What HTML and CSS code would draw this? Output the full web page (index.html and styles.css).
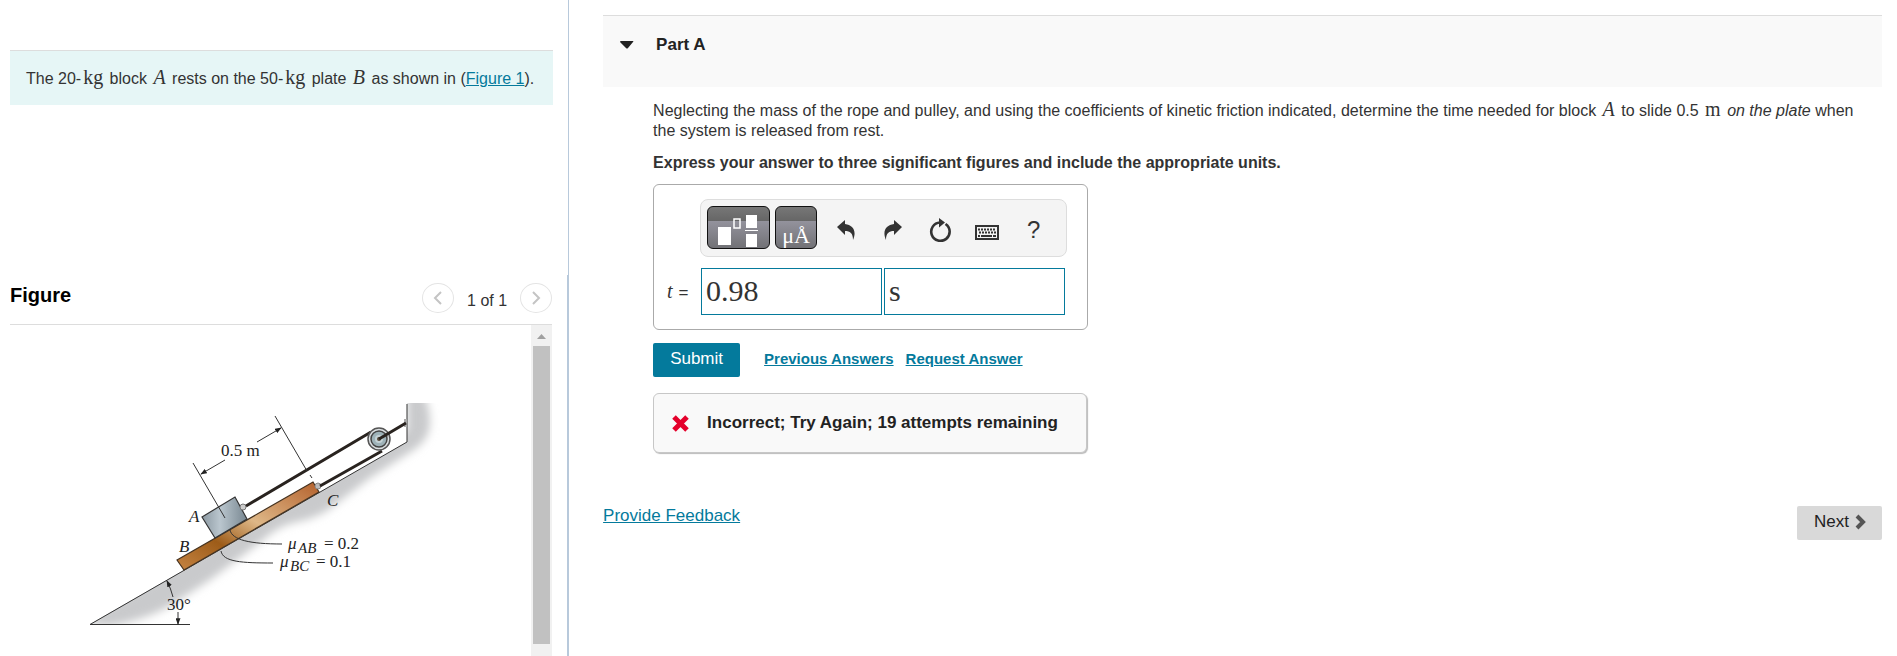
FILE: index.html
```html
<!DOCTYPE html>
<html lang="en">
<head>
  <meta charset="UTF-8">
  <meta name="viewport" content="width=device-width, initial-scale=1.0">
  <title>Part A</title>
  <link rel="stylesheet" href="styles.css">
</head>
<body>
  <div class="layout">
    <div class="left">
      <section class="intro-pane">
        <p class="intro">The 20-<span class="math">kg</span> block <i class="math">A</i> rests on the 50-<span class="math">kg</span> plate <i class="math">B</i> as shown in (<a href="#figure">Figure 1</a>).</p>
      </section>

      <section class="figure-pane" id="figure">
        <div class="figure-head">
          <h2>Figure</h2>
          <div class="pager">
            <button type="button" aria-label="Previous figure"><svg width="10" height="16" viewBox="0 0 10 16"><path d="M8 2 2 8l6 6"/></svg></button>
            <span>1 of 1</span>
            <button type="button" aria-label="Next figure"><svg width="10" height="16" viewBox="0 0 10 16"><path d="M2 2l6 6-6 6"/></svg></button>
          </div>
        </div>
        <div class="viewer">
          <div class="drawing">
            <svg width="360" height="250" viewBox="80 390 360 250" role="img" aria-label="Block A on plate B on a 30 degree incline">
              <defs>
                <linearGradient id="wood" x1="0" y1="1" x2="1" y2="0">
                  <stop offset="0" stop-color="#c68442"/>
                  <stop offset=".3" stop-color="#9d5c19"/>
                  <stop offset=".55" stop-color="#deb787"/>
                  <stop offset="1" stop-color="#b4612c"/>
                </linearGradient>
                <linearGradient id="steel" x1="0" y1="0" x2="1" y2="0">
                  <stop offset="0" stop-color="#8c99a2"/>
                  <stop offset=".4" stop-color="#bac6ce"/>
                  <stop offset="1" stop-color="#788791"/>
                </linearGradient>
                <filter id="soft" x="-10%" y="-10%" width="120%" height="120%"><feGaussianBlur stdDeviation="4"/></filter>
                <clipPath id="ground"><path d="M90 624 407 442V403H440V624Z"/></clipPath>
                <marker id="arrow" viewBox="0 0 8 6" refX="7" refY="3" markerWidth="7" markerHeight="5" markerUnits="userSpaceOnUse" orient="auto"><path d="M0 0 8 3 0 6Z" fill="#222"/></marker>
              </defs>

              <!-- ground -->
              <g clip-path="url(#ground)">
                <path d="M80 624 407 430V390H420Q430 402 430 422 430 440 412 451L370 478 336 504Q322 516 302 521 280 524 262 541L210 580 170 606Q145 620 110 626Z" fill="#c9cacc" filter="url(#soft)"/>
              </g>
              <path class="line" d="M190 624.500H90L407 442V404"/>

              <!-- plate, block -->
              <path d="M177 560 313 482 319 492 184 570Z" fill="url(#wood)" stroke="#45321f" stroke-width="1.200"/>
              <path d="M202 517 235 497 247 519 215 538Z" fill="url(#steel)" stroke="#333" stroke-width="1.200"/>

              <!-- ropes and pulley -->
              <circle cx="243" cy="507" r="3" fill="#ccc" stroke="#777"/>
              <circle cx="318" cy="486" r="3" fill="#bbb" stroke="#888"/>
              <path d="M404 419h3v8h-3z" fill="#aaa"/>
              <path class="rope" d="M246 506 371 432M320 486 382 451"/>
              <circle cx="379" cy="439" r="11" fill="#dde1e3" stroke="#555" stroke-width="1.500"/>
              <circle cx="379" cy="439" r="8" fill="#9eb2b8" stroke="#444" stroke-width="1.500"/>
              <circle cx="379" cy="439" r="4" fill="#c4d2d6"/>
              <circle cx="379" cy="439" r="2" fill="#5b4d3d"/>
              <path class="rope" d="M379 439 406 423"/>

              <!-- dimension -->
              <path class="line" d="M193 463 225 518M275 416 307 471M310 475 312 478"/>
              <path class="line" d="M225 460 201 474" marker-end="url(#arrow)"/>
              <path class="line" d="M257 442 281 428" marker-end="url(#arrow)"/>

              <!-- leaders and angle -->
              <path class="line" d="M230 530C232 540 250 544 282 544M221 551C223 562 242 563 273 563"/>
              <path class="line" d="M173 597Q171 589 167 581" marker-end="url(#arrow)"/>
              <path class="line" d="M178 612V624" marker-end="url(#arrow)"/>

              <text x="221" y="456">0.5 m</text>
              <text x="189" y="522" class="it">A</text>
              <text x="179" y="552" class="it">B</text>
              <text x="327" y="506" class="it">C</text>
              <text x="288" y="549" class="it">μ</text>
              <text x="298" y="553" class="it sub">AB</text>
              <text x="324" y="549">= 0.2</text>
              <text x="280" y="567" class="it">μ</text>
              <text x="290" y="571" class="it sub">BC</text>
              <text x="316" y="567">= 0.1</text>
              <text x="167" y="610">30°</text>
            </svg>
          </div>
          <div class="scrollbar" aria-hidden="true">
            <svg width="9" height="5" viewBox="0 0 9 5"><path d="M0 5 4.500 0 9 5Z" fill="#a0a0a0"/></svg>
            <div class="thumb"></div>
          </div>
        </div>
      </section>
    </div>

    <main class="right">
      <header class="part-head">
        <svg width="14" height="8" viewBox="0 0 14 8"><path d="M0 1Q0 0 1 0H13Q14 0 13 1L8 7Q7 8 6 7Z" fill="#222"/></svg>
        <h1>Part A</h1>
      </header>

      <div class="part-body">
        <p class="question">Neglecting the mass of the rope and pulley, and using the coefficients of kinetic friction indicated, determine the time needed for block <i class="math">A</i> to slide 0.5 <span class="math">m</span> <em>on the plate</em> when the system is released from rest.</p>
        <p class="instruction">Express your answer to three significant figures and include the appropriate units.</p>

        <div class="answer-box">
          <div class="toolbar">
            <button type="button" class="dark wide" aria-label="Templates">
              <svg width="40" height="34" viewBox="0 0 40 34"><path d="M0 13h13v18H0zM28 1h11v13H28zM28 20h11v13H28zM27 16h13v1H27z" fill="#fff"/><path d="M16 5h6v9h-6z" fill="none" stroke="#fff" stroke-width="1.500"/></svg>
            </button>
            <button type="button" class="dark units" aria-label="Units">μÅ</button>
            <button type="button" class="tool" aria-label="Undo">
              <svg width="18" height="20" viewBox="0 0 18 20"><path d="M0 7 8 0V4C16 5 20 11 16 20 16 13 13 11 8 11V15Z" fill="#333"/></svg>
            </button>
            <button type="button" class="tool" aria-label="Redo">
              <svg width="18" height="20" viewBox="0 0 18 20"><path d="M18 7 10 0V4C2 5-2 11 2 20 2 13 5 11 10 11V15Z" fill="#333"/></svg>
            </button>
            <button type="button" class="tool" aria-label="Reset">
              <svg width="22" height="24" viewBox="0 0 22 24"><path d="M16.500 6A9.200 9.200 0 1 1 11 4.500" fill="none" stroke="#333" stroke-width="2.600"/><path d="M10 0 16 4.500 10 9.500Z" fill="#333"/></svg>
            </button>
            <button type="button" class="tool keyboard" aria-label="Keyboard shortcuts">
              <svg width="24" height="15" viewBox="0 0 24 15"><rect x="1" y="1" width="22" height="13" fill="none" stroke="#333" stroke-width="2"/><path d="M3 4.500h18M4 7.500h17" stroke="#333" stroke-width="2" stroke-dasharray="2 1"/><path d="M3 11h2M6 11h11M18 11h3" stroke="#333" stroke-width="2"/></svg>
            </button>
            <button type="button" class="tool help" aria-label="Help">?</button>
          </div>
          <div class="fields">
            <label for="value"><i>t</i> =</label>
            <input type="text" id="value" value="0.98">
            <input type="text" class="unit" aria-label="Units" value="s">
          </div>
        </div>

        <div class="actions">
          <button type="button" class="submit">Submit</button>
          <a href="#previous">Previous Answers</a>
          <a href="#request">Request Answer</a>
        </div>

        <div class="feedback">
          <svg width="17" height="17" viewBox="0 0 17 17"><path d="M2 2 15 15M15 2 2 15" stroke="#e4002b" stroke-width="5"/></svg>
          <span>Incorrect; Try Again; 19 attempts remaining</span>
        </div>
      </div>

      <footer class="foot">
        <a href="#feedback">Provide Feedback</a>
        <button type="button" class="next">Next <svg width="12" height="16" viewBox="0 0 12 16"><path d="M2 2 8 8 2 14" fill="none" stroke="#555" stroke-width="4"/></svg></button>
      </footer>
    </main>
  </div>
</body>
</html>
```
FILE: styles.css
```css
* {
  box-sizing: border-box;
}
body {
  margin: 0;
  font-family: "Liberation Sans", Arial, sans-serif;
  font-size: 16px;
  line-height: 20px;
  color: #333;
  background: #fff;
}
h1, h2, p {
  margin: 0;
}
a {
  color: #047a9c;
}
button {
  font-family: inherit;
  cursor: pointer;
}
.math {
  padding: 0 2px;
  font-family: "Liberation Serif", "Times New Roman", serif;
  font-size: 20px;
}
.layout {
  display: grid;
  grid-template-columns: 30% 1fr;
  min-height: 100vh;
}

/* left side */
.left {
  display: flex;
  flex-direction: column;
}
.intro-pane {
  min-height: 275px;
  padding: 50px 15px 0 10px;
  border-right: 1px solid #b8c9db;
}
.intro {
  padding: 16px;
  border-top: 1px solid #ddd;
  background: #e6f6f6;
}
.figure-pane {
  flex: 1;
  display: flex;
  flex-direction: column;
  padding: 0 15px 0 10px;
  border-right: 2px solid #b8c9db;
}
.figure-head {
  display: flex;
  justify-content: space-between;
  height: 50px;
  padding-top: 8px;
  border-bottom: 1px solid #ddd;
}
.figure-head h2 {
  font-size: 20px;
  line-height: 24px;
  color: #000;
}
.pager {
  display: flex;
  align-items: flex-start;
  gap: 13px;
}
.pager span {
  padding-top: 8px;
}
.pager button {
  display: flex;
  align-items: center;
  justify-content: center;
  width: 32px;
  height: 30px;
  padding: 0;
  border: 1px solid #e4e4e4;
  border-radius: 50%;
  background: #fff;
}
.pager path {
  fill: none;
  stroke: #c4c4c4;
  stroke-width: 2px;
}
.viewer {
  flex: 1;
  display: flex;
  justify-content: space-between;
}
.drawing {
  padding: 65px 0 0 70px;
}
.drawing svg {
  display: block;
}
.drawing text {
  font-family: "Liberation Serif", "Times New Roman", serif;
  font-size: 17px;
  fill: #222;
}
.drawing .it {
  font-style: italic;
}
.drawing .sub {
  font-size: 15px;
}
.line {
  fill: none;
  stroke: #333;
  stroke-width: 1px;
}
.rope {
  fill: none;
  stroke: #29231f;
  stroke-width: 3px;
}
.scrollbar {
  display: flex;
  flex-direction: column;
  align-items: center;
  width: 21px;
  padding: 9px 2px 12px;
  background: #f1f1f1;
}
.thumb {
  flex: 1;
  width: 100%;
  margin-top: 7px;
  background: #c1c1c1;
}

/* right side */
.right {
  padding: 15px 15px 0 34px;
}
.part-head {
  display: flex;
  gap: 22px;
  height: 72px;
  padding: 19px 17px;
  border-top: 1px solid #ddd;
  background: #f9f9f9;
}
.part-head svg {
  margin-top: 6px;
}
h1 {
  font-size: 17px;
  line-height: 20px;
  color: #222;
}
.part-body {
  padding: 12px 0 0 50px;
}
.question {
  padding-right: 12px;
}
.instruction {
  margin-top: 12px;
  font-weight: bold;
}
.answer-box {
  width: 435px;
  margin-top: 11px;
  padding: 14px 20px 14px 13px;
  border: 1px solid #aaa;
  border-radius: 6px;
}
.toolbar {
  display: flex;
  align-items: center;
  height: 58px;
  margin-left: 33px;
  padding: 0 6px 2px;
  border: 1px solid #ddd;
  border-radius: 8px;
  background: #f4f4f4;
}
.toolbar button {
  display: flex;
  align-items: center;
  justify-content: center;
  padding: 0;
}
.toolbar .dark {
  width: 42px;
  height: 43px;
  margin-right: 5px;
  border: 1px solid #111;
  border-radius: 6px;
  color: #fff;
  background: linear-gradient(#777, #666 34%, #93929c 35%, #727276);
}
.toolbar .wide {
  width: 63px;
  padding: 7px 2px 0 0;
}
.toolbar .units {
  padding-top: 17px;
  font-family: "Liberation Serif", "Times New Roman", serif;
  font-size: 22px;
}
.toolbar .tool {
  width: 47px;
  height: 43px;
  padding-top: 5px;
  border: none;
  color: #333;
  background: none;
}
.toolbar .keyboard {
  padding-top: 10px;
}
.toolbar .help {
  font-size: 24px;
}
.fields {
  display: flex;
  align-items: center;
  gap: 2px;
  margin-top: 11px;
  padding-right: 2px;
}
.fields label {
  width: 32px;
  font-size: 17px;
}
.fields label i {
  padding-right: 1px;
  font-family: "Liberation Serif", "Times New Roman", serif;
  font-size: 20px;
}
.fields input {
  flex: 1;
  min-width: 0;
  height: 47px;
  padding: 0 4px 2px;
  border: 1px solid #047a9c;
  font-family: "Liberation Serif", "Times New Roman", serif;
  font-size: 30px;
  color: #333;
}
.actions {
  display: flex;
  align-items: center;
  margin-top: 13px;
}
.actions a {
  margin-right: 12px;
  padding-bottom: 2px;
  font-size: 15px;
  font-weight: bold;
}
.submit {
  width: 87px;
  height: 34px;
  margin-right: 24px;
  padding: 0 0 2px;
  border: none;
  border-radius: 2px;
  font-size: 17px;
  color: #fff;
  background: #047a9c;
}
.feedback {
  display: flex;
  align-items: center;
  gap: 18px;
  width: 434px;
  height: 60px;
  margin-top: 16px;
  padding-left: 18px;
  border: 1px solid #c7c7c7;
  border-radius: 6px;
  box-shadow: 1px 1px 1px #bbb;
  font-size: 17px;
  font-weight: bold;
  color: #222;
  background: #f9f9f9;
}
.foot {
  display: flex;
  justify-content: space-between;
  align-items: flex-start;
  margin-top: 53px;
  font-size: 17px;
}
.next {
  display: flex;
  align-items: center;
  gap: 6px;
  height: 34px;
  padding: 0 15px 3px 17px;
  border: none;
  border-radius: 2px;
  font-size: 17px;
  color: #222;
  background: #d9d9d9;
}
```
